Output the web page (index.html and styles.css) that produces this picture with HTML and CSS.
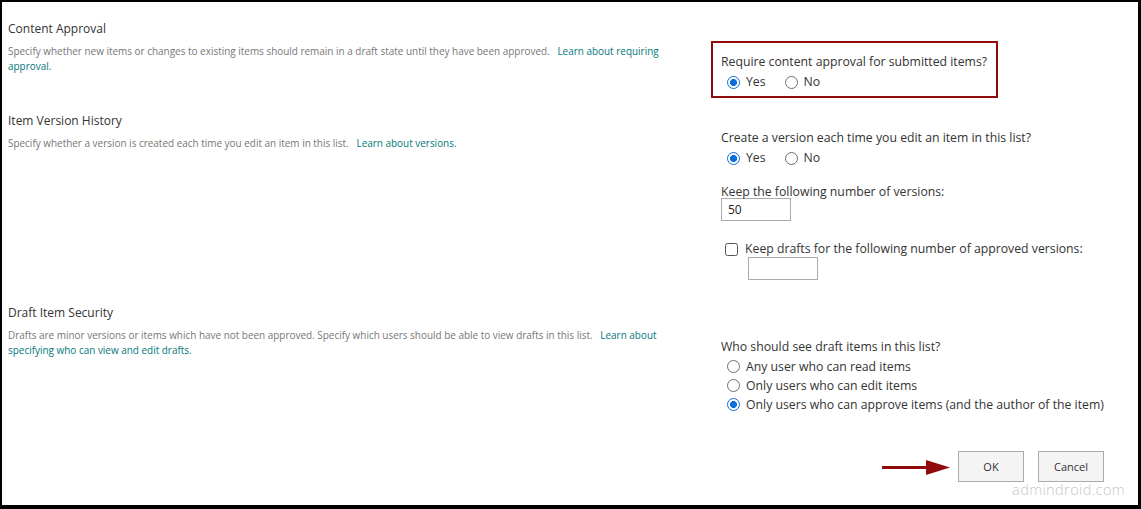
FILE: index.html
```html
<!DOCTYPE html>
<html lang="en">
<head>
<meta charset="utf-8">
<title>List Versioning Settings</title>
<link rel="stylesheet" href="styles.css">
</head>
<body>
<div class="frame">
  <section class="sect s1">
    <div class="left">
      <div class="title">Content Approval</div>
      <p class="desc">Specify whether new items or changes to existing items should remain in a draft state until they have been approved.&nbsp;&nbsp; <a href="#">Learn about requiring approval.</a></p>
    </div>
    <div class="right">
      <div class="highlight">
        <div class="q">Require content approval for submitted items?</div>
        <div class="radios inline">
          <label class="opt"><span class="radio on"></span>Yes</label>
          <label class="opt"><span class="radio"></span>No</label>
        </div>
      </div>
    </div>
  </section>

  <section class="sect s2">
    <div class="left">
      <div class="title">Item Version History</div>
      <p class="desc">Specify whether a version is created each time you edit an item in this list.&nbsp;&nbsp; <a href="#">Learn about versions.</a></p>
    </div>
    <div class="right">
      <div class="q">Create a version each time you edit an item in this list?</div>
      <div class="radios inline">
        <label class="opt"><span class="radio on"></span>Yes</label>
        <label class="opt"><span class="radio"></span>No</label>
      </div>
      <div class="q q2">Keep the following number of versions:</div>
      <div class="field">50</div>
      <label class="check"><span class="box"></span>Keep drafts for the following number of approved versions:</label>
      <div class="field field2"></div>
    </div>
  </section>

  <section class="sect s3">
    <div class="left">
      <div class="title">Draft Item Security</div>
      <p class="desc">Drafts are minor versions or items which have not been approved. Specify which users should be able to view drafts in this list.&nbsp;&nbsp; <a href="#">Learn about specifying who can view and edit drafts.</a></p>
    </div>
    <div class="right">
      <div class="q q3">Who should see draft items in this list?</div>
      <div class="radios stacked">
        <label class="opt"><span class="radio"></span>Any user who can read items</label>
        <label class="opt"><span class="radio"></span>Only users who can edit items</label>
        <label class="opt"><span class="radio on"></span>Only users who can approve items (and the author of the item)</label>
      </div>
    </div>
  </section>

  <div class="actions">
    <svg class="arrow" width="68" height="18" viewBox="0 0 68 18" aria-hidden="true">
      <path d="M0 9.5 H46" stroke="#8e0c0c" stroke-width="3.2" fill="none"/>
      <path d="M44 2 L68 9.5 L44 17 Z" fill="#8e0c0c"/>
    </svg>
    <button class="btn">OK</button>
    <button class="btn">Cancel</button>
  </div>
  <div class="watermark">admindroid.com</div>
</div>
</body>
</html>
```

FILE: styles.css
```css
* { box-sizing: border-box; }
html, body { margin: 0; padding: 0; background: #fff; }
body { font-family: "Open Sans", "Noto Sans", "Liberation Sans", sans-serif; }

.frame {
  position: relative;
  width: 1141px;
  height: 509px;
  border-style: solid;
  border-color: #000;
  border-width: 2px 3px 4px 2px;
  padding: 0 6px;
  overflow: hidden;
}

.sect {
  display: grid;
  grid-template-columns: 703px 1fr;
  align-items: start;
}
.s1 { padding-top: 18px; }
.s2 { padding-top: 14px; }
.s3 { padding-top: 24px; }

.title {
  font-size: 12px;
  line-height: 18px;
  color: #333;
}
.desc {
  margin: 6px 0 0;
  max-width: 660px;
  font-size: 9.95px;
  line-height: 15px;
  color: #777;
}
.desc a { color: #03787c; text-decoration: none; }

.right { color: #333; font-size: 12.25px; }
.s1 .right { padding-top: 21px; }
.s2 .right { padding-top: 16px; padding-left: 10px; }
.s3 .right { padding-left: 10px; }

.highlight {
  width: 287px;
  border: 2px solid #8e0c0c;
  padding: 9px 0 4px 8px;
}

.q { line-height: 20px; }
.q2 { margin-top: 14px; }
.q3 { margin-top: 33px; }

.radios.inline { display: flex; gap: 19px; height: 20px; padding-left: 6px; }
.radios.stacked { display: flex; flex-direction: column; padding-left: 6px; }
.radios.stacked .opt { height: 19px; }

.opt { display: flex; align-items: center; gap: 6px; line-height: 20px; }

.radio {
  width: 13px;
  height: 13px;
  border-radius: 50%;
  border: 1px solid #6e6e6e;
  background: #fff;
  flex: none;
}
.radio.on {
  border: 1.5px solid #0f6cdb;
  background: radial-gradient(circle, #0f6cdb 0 3.2px, #fff 3.8px);
}

.field {
  width: 70px;
  height: 23px;
  margin-top: -4px;
  border: 1px solid #ababab;
  padding: 0 0 0 6px;
  line-height: 21px;
  font-size: 12px;
  color: #222;
}
.field2 { margin-top: -2px; margin-left: 27px; }

.check {
  display: flex;
  align-items: center;
  gap: 7px;
  margin-top: 18px;
  padding-left: 4px;
  line-height: 20px;
}
.box {
  width: 13px;
  height: 13px;
  border: 1px solid #555;
  border-radius: 2.5px;
  flex: none;
}

.actions {
  display: flex;
  justify-content: flex-end;
  align-items: center;
  gap: 14px;
  margin-top: 37px;
  margin-right: 28px;
}
.arrow { margin-right: -6px; }
.btn {
  width: 66px;
  height: 31px;
  border: 1px solid #ababab;
  background: #f4f4f4;
  font-family: inherit;
  font-size: 11px;
  color: #333;
  padding: 0;
}

.watermark {
  position: absolute;
  right: 13px;
  top: 478px;
  font-size: 14.5px;
  letter-spacing: 0.4px;
  color: #c6c6c6;
  font-weight: 300;
}
```
